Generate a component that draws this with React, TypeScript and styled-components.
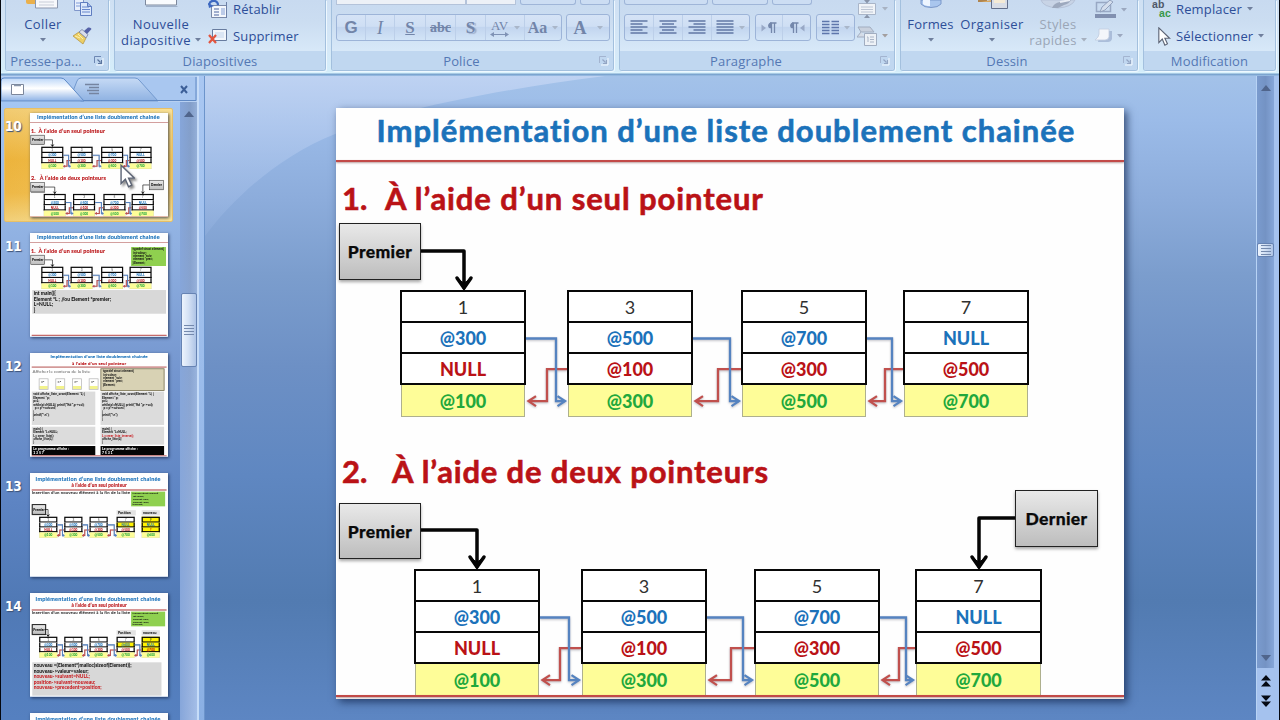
import React from "react";
import styled, { createGlobalStyle } from "styled-components";

const Global = createGlobalStyle`
  * { box-sizing: border-box; }
  body { margin: 0; background: #000; overflow: hidden; }
`;

const ui = `"Open Sans", "Noto Sans", sans-serif`;
const calibri = `Lato, "Liberation Sans", sans-serif`;
const BLUE = "#1b72ba";
const RED = "#ba1216";
const GREEN = "#21a83c";

/* ---------- application frame ---------- */

const Frame = styled.div`
  width: 1280px;
  height: 720px;
  overflow: hidden;
  display: flex;
  flex-direction: column;
  border-left: 1px solid #05080f;
  border-right: 1px solid #05080f;
  font-family: ${ui};
  background: #86a9dc;
`;

const Ribbon = styled.header`
  flex: none;
  height: 76px;
  display: flex;
  gap: 5px;
  padding: 0 3px 5px 4px;
  background: linear-gradient(#cfe0f3 0, #d6e9f8 50px, #d4edfa 72px, #e0f7ff 73px, #6f9bc8 74px, #9fc0e6 76px);
`;

const Group = styled.section<{ $w: number }>`
  flex: none;
  width: ${(p) => p.$w}px;
  height: 71px;
  display: flex;
  flex-direction: column;
  border: 1px solid #a3c0de;
  border-top: 0;
  border-radius: 0 0 3px 3px;
  box-shadow: 1px 1px 0 #eef8ff;
  background: linear-gradient(#c8daf0, #cbddf1 22px, #d7e8f8 50px);
  overflow: hidden;
`;

const GroupBody = styled.div<{ $pad?: number }>`
  flex: none;
  height: 51px;
  display: flex;
  padding-left: ${(p) => p.$pad ?? 0}px;
`;

const GroupLabel = styled.div<{ $shift?: number }>`
  position: relative;
  height: 19px;
  line-height: 20px;
  text-align: center;
  padding-right: ${(p) => p.$shift ?? 0}px;
  font-size: 13px;
  letter-spacing: 0.15px;
  color: #5478b4;
  white-space: nowrap;
  background: #c0d7f0;
  svg { position: absolute; right: 4px; top: 4px; }
`;

const BigButton = styled.div<{ $w: number; $dim?: boolean; $ls?: number }>`
  flex: none;
  width: ${(p) => p.$w}px;
  display: flex;
  flex-direction: column;
  align-items: center;
  font-size: 13px;
  line-height: 16px;
  letter-spacing: ${(p) => p.$ls ?? 0.15}px;
  color: ${(p) => (p.$dim ? "#9ba6b6" : "#2d4e98")};
  white-space: nowrap;
  > svg:first-child { flex: none; height: 16px; }
`;

const Line = styled.span`
  display: flex;
  align-items: center;
  min-height: 15px;
  gap: 4px;
`;

const IconColumn = styled.div<{ $w: number }>`
  flex: none;
  width: ${(p) => p.$w}px;
  display: flex;
  flex-direction: column;
`;

const SmallButton = styled.div<{ $h: number; $indent?: number }>`
  display: flex;
  align-items: center;
  height: ${(p) => p.$h}px;
  padding-left: ${(p) => p.$indent ?? 0}px;
  gap: 5px;
  font-size: 13px;
  letter-spacing: 0.15px;
  color: #2d4e98;
  white-space: nowrap;
  svg { flex: none; }
`;

const Tools = styled.div`
  display: flex;
  flex-direction: column;
  gap: 9px;
  padding-left: 4px;
`;

const ToolRow = styled.div<{ $gap: number }>`
  display: flex;
  gap: ${(p) => p.$gap}px;
`;

const BoxTop = styled.div<{ $w: number; $white?: boolean }>`
  width: ${(p) => p.$w}px;
  height: 5px;
  border: 1px solid ${(p) => (p.$white ? "#b4c3da" : "#9fb5d8")};
  border-top: 0;
  border-radius: ${(p) => (p.$white ? "0" : "0 0 3px 3px")};
  background: ${(p) => (p.$white ? "#edf1f7" : "#ccddf3")};
`;

const ToolBox = styled.div`
  height: 27px;
  display: flex;
  border: 1px solid #9db4d8;
  border-radius: 3px;
  background: linear-gradient(#d5e3f6 0, #cfdff4 45%, #c2d5ef 50%, #d2e4f7 100%);
`;

const Tool = styled.div<{ $w: number }>`
  width: ${(p) => p.$w}px;
  display: flex;
  align-items: center;
  justify-content: center;
  gap: 5px;
  border-right: 1px solid #bccfe9;
  color: #7285a9;
  &:last-child { border-right: 0; }
`;

type GlyphKind = "sans" | "italic" | "under" | "strike" | "shadow";

const Glyph = styled.span<{ $size: number; $kind?: GlyphKind }>`
  font-family: ${(p) => (p.$kind === "sans" ? `"Liberation Sans", sans-serif` : `"Liberation Serif", serif`)};
  font-size: ${(p) => p.$size}px;
  font-weight: ${(p) => (p.$kind === "italic" ? 400 : 700)};
  font-style: ${(p) => (p.$kind === "italic" ? "italic" : "normal")};
  text-decoration: ${(p) => (p.$kind === "under" ? "underline" : p.$kind === "strike" ? "line-through" : "none")};
  text-shadow: ${(p) => (p.$kind === "shadow" ? "2px 1px 1px #9aaac8" : "none")};
  line-height: 20px;
`;

const SpacingGlyph = styled.div`
  display: flex;
  flex-direction: column;
  align-items: center;
  font: 400 13px/13px "Liberation Serif", serif;
`;

const Caret = ({ color = "#6f7f9d", w = 6 }: { color?: string; w?: number }) => (
  <svg width={w} height="4" viewBox="0 0 6 4"><path d="M0 0h6L3 3.6z" fill={color} /></svg>
);

const Launcher = ({ dim }: { dim?: boolean }) => (
  <svg width="11" height="11" viewBox="0 0 11 11" fill="none" stroke={dim ? "#a3b4d0" : "#6d87b3"}>
    <path d="M1.5 8V1.5H8" />
    <path d="M4.500 4.500l3 3M8.500 5v3.500H5" stroke={dim ? "#93a5c4" : "#5b759f"} strokeWidth="1.2" />
    <path d="M10 3v7H3" stroke="#f4faff" />
  </svg>
);

/* ---------- ribbon icons ---------- */

const PasteIcon = () => (
  <svg width="34" height="16" viewBox="0 0 34 16">
    <path d="M0 0h14v4H2q-2 0-2-2z" fill="#eab04c" />
    <path d="M9.500 0v8h22V0" fill="#f7f8fb" stroke="#8c97ad" />
    <path d="M13 2h15M13 5h15" stroke="#c8cdd8" />
  </svg>
);
const CopyIcon = () => (
  <svg width="20" height="17" viewBox="0 0 20 17">
    <path d="M1.500 0v10.500h9V0" fill="#e8effb" stroke="#8097cb" />
    <path d="M3 3h6M3 6h6" stroke="#7e9bd8" />
    <path d="M7.500 2.500h7l4 4v9h-11z" fill="#dce8fb" stroke="#5f7dc0" />
    <path d="M9 7h7M9 9.500h8M9 12h8" stroke="#6686cc" />
    <path d="M14.500 2.500v4h4" fill="#9eb6e5" stroke="#5f7dc0" />
  </svg>
);
const BrushIcon = () => (
  <svg width="20" height="18" viewBox="0 0 20 18">
    <path d="M0 9l6-4 7 6-3 6q-5-4-10-8z" fill="#eccf66" stroke="#b89745" strokeWidth=".8" />
    <path d="M2 9l5 2M5 7l5 5" stroke="#fff0a8" />
    <path d="M6 5l3-2.500 6 5L13 11z" fill="#d9ddea" stroke="#7580a0" strokeWidth=".8" />
    <path d="M11 4l4-3.500q3-.5 3.500 1.500L14 7z" fill="#5562a8" />
  </svg>
);
const SlideIcon = () => (
  <svg width="34" height="16" viewBox="0 0 34 16">
    <path d="M1.500 0v5h31V0" fill="#f9fbfe" stroke="#7d889d" />
    <path d="M2 6.500h31.500" stroke="#9fb0c9" />
  </svg>
);
const ResetIcon = () => (
  <svg width="20" height="19" viewBox="0 0 20 19">
    <path d="M3.500 5.500h15v12h-15z" fill="#f4f7fc" stroke="#7a89a8" />
    <path d="M18.500 2v16" stroke="#6c7fa6" />
    <path d="M6 9h5M6 12h5M6 15h5" stroke="#8497bf" strokeWidth="1.300" />
    <path d="M13 8h4v7h-4z" fill="#bccbe8" />
    <path d="M1 5q1-5 6-4 3 1 3 4" fill="none" stroke="#3d68c0" strokeWidth="2.200" />
    <path d="M0 3l6 3-5 2z" fill="#3d68c0" />
  </svg>
);
const DeleteIcon = () => (
  <svg width="20" height="16" viewBox="0 0 20 16">
    <path d="M4.500 1.500h14v11h-14z" fill="#f2f6fb" stroke="#687c9f" />
    <path d="M7 4h9v6H7z" fill="#dbe6f4" />
    <path d="M1 7l7 8M8 7l-7 8" stroke="#e25640" strokeWidth="2.300" />
  </svg>
);
const SpacingIcon = () => (
  <svg width="19" height="5" viewBox="0 0 19 5" fill="#7f92b5"><path d="M0 2.500L4 0v2h11V0l4 2.500L15 5V3H4v2z" /></svg>
);
const AlignIcon = ({ mode }: { mode: "l" | "c" | "r" | "j" }) => (
  <svg width="18" height="15" viewBox="0 0 18 15" stroke="#6177a4" strokeWidth="1.600">
    {[0.5, 3.5, 6.5, 9.5, 12.500].map((y, i) => {
      const w = mode === "j" || i % 2 === 0 ? 17 : 12;
      const x = mode === "r" ? 17.500 - w : mode === "c" ? (18 - w) / 2 : 0.500;
      return <path key={y} d={`M${x} ${y + 0.500}h${w}`} />;
    })}
  </svg>
);
const PilcrowIcon = ({ flip }: { flip?: boolean }) => (
  <svg width="16" height="12" viewBox="0 0 16 12">
    <path d={flip ? "M15.500 2.500v7L11 6z" : "M.5 2.500v7L5 6z"} fill="#98a8c6" />
    <g transform={flip ? "translate(-6 0)" : undefined} stroke="#7487ab" strokeWidth="1.300">
      <path d="M10.500 1v10M13.500 1v10M9 1h6.500" />
      <path d="M10 1.200a2.200 2.200 0 0 0 0 4.500z" fill="#7487ab" />
    </g>
  </svg>
);
const ColumnsIcon = () => (
  <svg width="17" height="15" viewBox="0 0 17 15" stroke="#5e76ab" strokeWidth="1.600">
    <path d="M0 1.500h7.500M0 4.500h7.500M0 7.500h7.500M0 10.500h7.500M0 13.500h7.500M9.500 1.500H17M9.500 4.500H17M9.500 7.500H17M9.500 10.500H17M9.500 13.500H17" />
  </svg>
);
const AlignTextIcon = () => (
  <svg width="20" height="18" viewBox="0 0 20 18">
    <path d="M1.500 3.500h17v11h-17z" fill="#f1f4f8" stroke="#a9b5c8" />
    <path d="M4 7h12M4 9.500h12M4 12h12" stroke="#bcc5d4" />
    <path d="M7 0h6l-3 3.500zM7 18h6l-3-3.500z" fill="#8995aa" />
  </svg>
);
const SmartArtIcon = () => (
  <svg width="20" height="20" viewBox="0 0 20 20">
    <path d="M1 1h12l4 5H4z" fill="#c9d1de" stroke="#a1adc0" />
    <path d="M4 6L0 11h8" fill="#d5dce7" stroke="#a1adc0" />
    <path d="M7.500 7.500h12v12h-12z" fill="#edf1f6" stroke="#a1adc0" />
    <path d="M10 11h1v5M13 11h4M13 13.500h4M13 16h4" stroke="#aab5c7" fill="none" />
  </svg>
);
const ShapesIcon = () => (
  <svg width="24" height="16" viewBox="0 0 24 16">
    <path d="M2 0v4q3 3.500 10 3.500T22 4V0z" fill="#a9c6ee" stroke="#7b98ca" />
    <path d="M4 0h7v6Q6 6 4 4z" fill="#edf5ff" />
  </svg>
);
const ArrangeIcon = () => (
  <svg width="34" height="16" viewBox="0 0 34 16">
    <path d="M3 0h9v2H3z" fill="#b0854f" />
    <path d="M6 2h10v-2" fill="#d8a862" />
    <path d="M16.500 0v8.500h16V0" fill="#d9dde6" stroke="#64708c" />
    <path d="M19 0v3h11V0" fill="#f5ead5" />
  </svg>
);
const StylesIcon = () => (
  <svg width="36" height="16" viewBox="0 0 36 16">
    <path d="M1 0q2 7 17 8 14-1 17-8z" fill="#c8d4e6" stroke="#b5c2d8" />
    <path d="M12 8q2-5 8-6l5-2h6q-2 4-7 5l-6 3z" fill="#9da9be" />
    <path d="M20 2L30 0" stroke="#e8edf5" strokeWidth="2" />
  </svg>
);
const OutlineIcon = () => (
  <svg width="21" height="19" viewBox="0 0 21 19">
    <path d="M1.500 2.500h14v9h-14z" fill="none" stroke="#98a8c4" strokeWidth="1.500" />
    <path d="M5 12l2-5 8-7 3 2-8 8z" fill="#d4deed" stroke="#92a1bd" />
    <path d="M0 14h21v4H0z" fill="#8190b0" />
  </svg>
);
const EffectsIcon = () => (
  <svg width="17" height="16" viewBox="0 0 17 16">
    <path d="M5 3h12v8q-1 3-4 3H3z" fill="#9eb0d0" opacity=".75" />
    <path d="M4 1h10v8q-1 3-4 3H0q4-3 4-6z" fill="#f4f6fa" stroke="#c2cde0" strokeWidth=".8" />
  </svg>
);
const ReplaceIcon = styled.div`
  width: 19px;
  display: flex;
  flex-direction: column;
  font: 700 10.500px/9px "Liberation Sans", sans-serif;
  color: #4f5868;
  span:last-child { align-self: flex-end; color: #37984a; }
`;
const Pointer = ({ w, h }: { w: number; h: number }) => (
  <svg width={w} height={h} viewBox="0 0 14 22">
    <path d="M1 1v17l4-4 3 7 3-1.500-3-6.500h5.500z" fill="#fff" stroke="#5c6475" strokeWidth="1.300" />
  </svg>
);

/* ---------- slide canvas ---------- */

const SlideSurface = styled.div`
  position: relative;
  width: 788px;
  height: 591px;
  background: #fefefe;
  overflow: hidden;
  font-family: ${calibri};
`;

const Placed = styled.div<{ $x: number; $y: number; $w?: number; $h?: number }>`
  position: absolute;
  left: ${(p) => p.$x}px;
  top: ${(p) => p.$y}px;
  width: ${(p) => (p.$w ? `${p.$w}px` : "auto")};
  height: ${(p) => (p.$h ? `${p.$h}px` : "auto")};
`;

const SlideText = styled(Placed)<{ $size: number; $color: string; $ls?: number; $weight?: number; $center?: boolean }>`
  font-size: ${(p) => p.$size}px;
  line-height: 1.2;
  font-weight: ${(p) => p.$weight ?? 700};
  -webkit-text-stroke: ${(p) => (p.$weight === 400 ? 0 : 0.6)}px currentColor;
  color: ${(p) => p.$color};
  letter-spacing: ${(p) => p.$ls ?? 0}px;
  text-align: ${(p) => (p.$center ? "center" : "left")};
  white-space: pre;
`;

const Rule = styled(Placed)`
  background: #c24a48;
  box-shadow: 0 1px 2px rgba(120, 60, 60, 0.5);
`;

const PointerBox = styled(Placed)<{ $line: number }>`
  display: flex;
  align-items: center;
  justify-content: center;
  border: ${(p) => p.$line}px solid #222;
  background: linear-gradient(#e9e9e9, #bdbdbd);
  box-shadow: 0 2px 3px rgba(0, 0, 0, 0.35);
  font-size: 17.500px;
  font-weight: 900;
  letter-spacing: 0.35px;
  -webkit-text-stroke: 0.25px currentColor;
  color: #0a0a0a;
`;

const Node = styled(Placed)`
  display: flex;
  flex-direction: column;
`;

const Cell = styled.div<{ $color: string; $bg: string; $line: number; $last?: boolean; $first?: boolean; $plain?: boolean }>`
  flex: ${(p) => (p.$last ? "0 0 25.500%" : "1 1 0")};
  min-height: 0;
  display: flex;
  align-items: center;
  justify-content: center;
  padding-top: 2px;
  background: ${(p) => p.$bg};
  color: ${(p) => p.$color};
  font-size: 18px;
  line-height: 20px;
  font-weight: ${(p) => (p.$plain ? 400 : 900)};
  border: ${(p) => (p.$last ? 1 : p.$line)}px solid ${(p) => (p.$last ? "#aeb08e" : "#080808")};
  border-top-width: ${(p) => (p.$first ? p.$line : 0)}px;
  margin: ${(p) => (p.$last ? "0 1px" : "0")};
`;

const Vectors = styled.svg`
  position: absolute;
  inset: 0;
`;

type NodeSpec = { x: number; cells: string[]; hot?: number[] };

function NodeView({ n, y, w, h, line }: { n: NodeSpec; y: number; w: number; h: number; line: number }) {
  const colors = ["#303030", BLUE, RED, GREEN];
  return (
    <Node $x={n.x} $y={y} $w={w} $h={h}>
      {n.cells.map((c, i) => (
        <Cell
          key={i}
          $color={colors[i]}
          $bg={i === 3 ? "#fefd98" : n.hot?.includes(i) ? "#fff200" : "#fff"}
          $line={line}
          $first={i === 0}
          $last={i === 3}
          $plain={i === 0}
        >
          {c}
        </Cell>
      ))}
    </Node>
  );
}

type Link = { from: number; to: number; bx: number; rx: number };

const LinkGroup = styled.g`
  filter: drop-shadow(0 1px 1px rgba(60, 60, 80, 0.35));
`;

function Links({ links, y, step, thin }: { links: Link[]; y: number; step: number; thin: number }) {
  const y1 = y + step * 1.550, y2 = y + step * 2.530, y3 = y + step * 3.550;
  return (
    <LinkGroup fill="none" strokeWidth={thin}>
      {links.map((l) => (
        <g key={l.from}>
          <path stroke="#c0504d" d={`M${l.to} ${y2}H${l.rx}V${y3}H${l.from + 4}`} />
          <path stroke="#c0504d" d={`M${l.from + 10} ${y3 - 5}L${l.from + 2.500} ${y3}l7.500 5`} />
          <path stroke="#5583c0" d={`M${l.from} ${y1}H${l.bx}V${y3}H${l.to - 2}`} />
          <path stroke="#5583c0" d={`M${l.to - 9.500} ${y3 - 5}L${l.to - 2} ${y3}l-7.500 5`} />
        </g>
      ))}
    </LinkGroup>
  );
}

const DropArrow = ({ x, y, tx, ty }: { x: number; y: number; tx: number; ty: number }) => (
  <g stroke="#050505" strokeWidth="3.500" fill="none" strokeLinejoin="round">
    <path d={`M${x} ${y}H${tx}V${ty - 4}`} />
    <path d={`M${tx - 7} ${ty - 12}L${tx} ${ty - 2}l7 -10`} strokeLinecap="round" />
    <path d={`M${tx - 5} ${ty - 10}L${tx} ${ty}l5 -10L${tx} ${ty - 7}z`} fill="#050505" strokeWidth="1" />
  </g>
);

const values = [
  ["1", "@300", "NULL", "@100"],
  ["3", "@500", "@100", "@300"],
  ["5", "@700", "@300", "@500"],
  ["7", "NULL", "@500", "@700"],
];
const rowA: NodeSpec[] = [64, 231, 405, 567].map((x, i) => ({ x, cells: values[i] }));
const rowB: NodeSpec[] = [78, 245, 418, 579].map((x, i) => ({ x, cells: values[i] }));
const linksA: Link[] = [
  { from: 190, to: 231, bx: 220, rx: 211 },
  { from: 357, to: 405, bx: 394, rx: 382 },
  { from: 531, to: 567, bx: 556, rx: 549 },
];
const linksB: Link[] = [
  { from: 204, to: 245, bx: 233, rx: 224 },
  { from: 371, to: 418, bx: 407, rx: 395 },
  { from: 544, to: 579, bx: 570, rx: 563 },
];

function Title() {
  return (
    <>
      <SlideText $x={40.500} $y={3.500} $size={31} $color={BLUE} $ls={0.99}>
        Implémentation d’une liste doublement chainée
      </SlideText>
      <Rule $x={0} $y={52} $w={788} $h={2} />
    </>
  );
}

function FirstList({ line, thin, dy = 0 }: { line: number; thin: number; dy?: number }) {
  return (
    <Placed $x={0} $y={dy} $w={788} $h={320}>
      <SlideText $x={6} $y={72} $size={31} $color={RED}>1.</SlideText>
      <SlideText $x={49} $y={72} $size={31} $color={RED} $ls={0.9}>À l’aide d’un seul pointeur</SlideText>
      <PointerBox $x={3} $y={115} $w={82} $h={57} $line={line / 2}>Premier</PointerBox>
      {rowA.map((n) => <NodeView key={n.x} n={n} y={182} w={126} h={127} line={line} />)}
      <Vectors width="788" height="320">
        <Links links={linksA} y={182} step={31.300} thin={thin} />
        <DropArrow x={85} y={143} tx={128} ty={182} />
      </Vectors>
    </Placed>
  );
}

function MainSlide({ line = 2.500, thin = 2.300, dy = 0 }: { line?: number; thin?: number; dy?: number }) {
  return (
    <SlideSurface>
      <Title />
      <FirstList line={line} thin={thin} dy={dy} />
      <SlideText $x={6} $y={345 + dy / 2} $size={31} $color={RED}>2.</SlideText>
      <SlideText $x={56} $y={345 + dy / 2} $size={31} $color={RED} $ls={0.83}>À l’aide de deux pointeurs</SlideText>
      <PointerBox $x={3} $y={395} $w={82} $h={56} $line={line / 2}>Premier</PointerBox>
      <PointerBox $x={679} $y={382} $w={83} $h={57} $line={line / 2}>Dernier</PointerBox>
      {rowB.map((n) => <NodeView key={n.x} n={n} y={461} w={n.x === 579 ? 127 : 126} h={127} line={line} />)}
      <Vectors width="788" height="591">
        <Links links={linksB} y={461} step={31.300} thin={thin} />
        <DropArrow x={85} y={422} tx={141} ty={461} />
        <DropArrow x={679} y={410} tx={643} ty={461} />
      </Vectors>
      <Rule $x={0} $y={587} $w={788} $h={2} />
    </SlideSurface>
  );
}

/* ---------- other slides, shown only as thumbnails ---------- */

const CodeBox = styled(Placed)<{ $bg: string; $size: number; $fg?: string; $border?: string }>`
  background: ${(p) => p.$bg};
  color: ${(p) => p.$fg ?? "#111"};
  border: ${(p) => (p.$border ? `4px solid ${p.$border}` : "0")};
  font-size: ${(p) => p.$size}px;
  line-height: 1.120;
  font-weight: 900;
  padding: 3px 8px;
  white-space: pre;
  em { font-style: normal; color: #c81a1e; }
`;

const struct = "typedef struct element{\n int valeur;\n element *suiv;\n element *prec;\n}Element;";

function Slide11() {
  return (
    <SlideSurface>
      <Title />
      <FirstList line={7} thin={6} dy={10} />
      <CodeBox $x={576} $y={80} $w={199} $h={108} $bg="#8fd04f" $size={17}>{struct}</CodeBox>
      <CodeBox $x={13} $y={325} $w={762} $h={135} $bg="#d8d8d8" $size={28}>
        {"int main(){\nElement *L ; //ou Element *premier;\nL=NULL;\n}"}
      </CodeBox>
      <Rule $x={10} $y={580} $w={768} $h={5} />
    </SlideSurface>
  );
}

const printer = "void affiche_liste_avant(Element *L) {\nElement *p;\np=L;\nwhile(p!=NULL){ printf(\"%d \",p->val);\n  p = p->suivant;\n}\nprintf(\"\\n\");\n}";
const caller = "main() {\nElement *L=NULL;\nL = creer_liste();\naffiche_liste(L);\n}";

function Slide12() {
  return (
    <SlideSurface>
      <SlideText $x={0} $y={6} $w={788} $size={25} $color={BLUE} $ls={0.6} $center>Implémentation d’une liste doublement chainée</SlideText>
      <SlideText $x={0} $y={42} $w={788} $size={25} $color={RED} $ls={1} $center>à l’aide d’un seul pointeur</SlideText>
      <Rule $x={10} $y={78} $w={768} $h={4} />
      <SlideText $x={14} $y={90} $size={26} $color="#666" $weight={400}>Afficher le contenu de la liste</SlideText>
      {[50, 145, 240, 335].map((x) => (
        <CodeBox key={x} $x={x} $y={145} $w={55} $h={64} $bg="linear-gradient(#fff 70%, #f3f38c 70%)" $border="#b3b3b3" $size={14}>@1</CodeBox>
      ))}
      <CodeBox $x={10} $y={220} $w={362} $h={190} $bg="#dcdcdc" $size={18}>{printer}</CodeBox>
      <CodeBox $x={402} $y={220} $w={362} $h={190} $bg="#dcdcdc" $size={18}>{printer}</CodeBox>
      <CodeBox $x={402} $y={88} $w={364} $h={128} $bg="#d8d2b4" $border="#6d6748" $size={17}>{struct}</CodeBox>
      <CodeBox $x={10} $y={420} $w={362} $h={102} $bg="#dcdcdc" $size={17}>{caller}</CodeBox>
      <CodeBox $x={402} $y={420} $w={362} $h={102} $bg="#dcdcdc" $size={17}>
        {"main() {\nElement *L=NULL;\n"}<em>{"L = creer_liste_inverse();\n"}</em>{"affiche_liste(L);\n}"}
      </CodeBox>
      <CodeBox $x={10} $y={530} $w={362} $h={52} $bg="#050505" $fg="#fff" $size={20}>{"Le programme affiche :\n1 3 5 7"}</CodeBox>
      <CodeBox $x={402} $y={530} $w={362} $h={52} $bg="#050505" $fg="#fff" $size={20}>{"Le programme affiche :\n7 5 3 1"}</CodeBox>
      <Rule $x={10} $y={584} $w={768} $h={4} />
    </SlideSurface>
  );
}

const LowTitle = () => (
  <SlideText $x={32} $y={14} $size={31} $color={BLUE} $ls={1.300}>Implémentation d’une liste doublement chainée</SlideText>
);

function InsertSlide({ done }: { done?: boolean }) {
  const nodes: NodeSpec[] = [
    { x: 52, cells: values[0] },
    { x: 195, cells: values[1] },
    { x: 339, cells: values[2] },
    { x: 493, cells: ["7", done ? "@600" : "NULL", "@500", "@700"], hot: [1] },
    { x: 636, cells: ["9", "NULL", done ? "@700" : "?", "@600"], hot: [0, 1, 2] },
  ];
  const links: Link[] = [
    { from: 155, to: 195, bx: 185, rx: 170 },
    { from: 298, to: 339, bx: 328, rx: 312 },
    { from: 442, to: 493, bx: 480, rx: 458 },
  ];
  if (done) links.push({ from: 596, to: 636, bx: 626, rx: 611 });
  return (
    <SlideSurface>
      <LowTitle />
      <SlideText $x={0} $y={57} $w={788} $size={26} $color={RED} $ls={0.8} $center>à l’aide d’un seul pointeur</SlideText>
      <Rule $x={10} $y={94} $w={768} $h={5} />
      <SlideText $x={10} $y={97} $size={24} $color="#444" $ls={0.8}>Insertion d’un nouveau élément à la fin de la liste</SlideText>
      <CodeBox $x={576} $y={106} $w={194} $h={84} $bg="#8fd04f" $size={14}>{struct}</CodeBox>
      <PointerBox $x={10} $y={177} $w={82} $h={62} $line={6}>Premier</PointerBox>
      <CodeBox $x={493} $y={212} $w={110} $h={30} $bg="#e3e3e3" $size={20}>Position</CodeBox>
      <CodeBox $x={636} $y={212} $w={104} $h={30} $bg="#e3e3e3" $size={20}>nouveau</CodeBox>
      {nodes.map((n) => <NodeView key={n.x} n={n} y={249} w={104} h={120} line={7} />)}
      <Vectors width="788" height="591">
        <Links links={links} y={249} step={30} thin={6} />
        <DropArrow x={85} y={208} tx={103} ty={249} />
      </Vectors>
      {done && (
        <CodeBox $x={13} $y={395} $w={736} $h={190} $bg="#d8d8d8" $size={28}>
          {"nouveau =(Element*)malloc(sizeof(Element));\nnouveau->valeur=valeur;\n"}
          <em>{"nouveau->suivant=NULL;\nposition->suivant=nouveau;\nnouveau->precedent=position;"}</em>
        </CodeBox>
      )}
    </SlideSurface>
  );
}

/* ---------- panes ---------- */

const Body = styled.div`
  flex: 1;
  min-height: 0;
  display: flex;
`;

const SidePane = styled.aside`
  flex: none;
  width: 196px;
  display: flex;
  flex-direction: column;
`;

const Tabs = styled.div`
  flex: none;
  height: 26px;
  background: #b7d0f2;
  svg { display: block; }
`;

const SideContent = styled.div`
  flex: 1;
  min-height: 0;
  display: flex;
`;

const ThumbList = styled.div`
  flex: 1;
  min-width: 0;
  padding: 5px 6px 0 3px;
  overflow: hidden;
  background: linear-gradient(#a4c6f3 0, #8eafe0 150px, #7496cf 270px, #5d84c3 400px, #5079b5 500px, #5580c0 618px);
`;

const ThumbRow = styled.div<{ $on?: boolean }>`
  position: relative;
  height: 120px;
  display: flex;
  align-items: flex-start;
  padding: 6px 0 0 1px;
  &::before {
    content: "";
    display: ${(p) => (p.$on ? "block" : "none")};
    position: absolute;
    inset: 1px 1px 5px 0;
    border: 1px solid #e8c067;
    border-radius: 2px;
    background: linear-gradient(90deg, rgba(222, 150, 24, 0.25), rgba(255, 240, 170, 0.2)), linear-gradient(#f8dd90, #f1bd48 45%, #f3c355 75%, #f8e39b);
  }
  > * { position: relative; }
`;

const ThumbNumber = styled.div`
  width: 25px;
  padding-top: 4px;
  font: 700 13.500px/18px "DejaVu Sans Condensed", "DejaVu Sans", sans-serif;
  letter-spacing: -0.3px;
  color: #fff;
  text-shadow: 1px 1px 1px #3c5278;
`;

const ThumbFrame = styled.div`
  width: 138px;
  height: 104px;
  overflow: hidden;
  box-shadow: 1px 1px 3px rgba(20, 35, 70, 0.75);
  > div { transform: scale(0.1755); transform-origin: 0 0; }
`;

const CursorSpot = styled.div`
  && { position: absolute; }
  left: 116px;
  top: 57px;
  filter: drop-shadow(2px 2px 1px rgba(0, 0, 0, 0.45));
`;

const Scroll = styled.div<{ $w: number }>`
  flex: none;
  width: ${(p) => p.$w}px;
  display: flex;
  flex-direction: column;
  align-items: center;
  background: linear-gradient(90deg, #7a9bce, #7493c4 50%, #86a6d8);
`;

const SideScroll = styled(Scroll)`
  background: linear-gradient(90deg, #86a6da, rgba(255, 255, 255, 0.12) 60%, rgba(210, 230, 255, 0.35)), linear-gradient(#7291c2, #7897ca 40%, #8ba9dc);
`;

const Spacer = styled.div<{ $h: number }>`
  flex: none;
  height: ${(p) => p.$h}px;
`;

const Grip = styled.div<{ $w: number; $h: number }>`
  flex: none;
  width: ${(p) => p.$w}px;
  height: ${(p) => p.$h}px;
  display: flex;
  align-items: center;
  justify-content: center;
  border: 1px solid #6683b3;
  border-radius: 2px;
  background: linear-gradient(90deg, #edf4fd, #d5e2f5 45%, #aec4e6);
`;

const Splitter = styled.div`
  flex: none;
  width: 8px;
  background: linear-gradient(rgba(255, 255, 255, 0), rgba(82, 132, 200, 0.35));
  background-color: #a9c7f2;
  border-left: 2px solid #c6dcf8;
  border-right: 1px solid #6c94cb;
`;

const Stage = styled.main`
  position: relative;
  flex: 1;
  min-width: 0;
  padding: 32px 0 0 131px;
  overflow: hidden;
  background: linear-gradient(#a3c2e9 0, #9bbbe8 45px, #8cacdb 125px, #7b9dcd 200px, #6d90c5 290px, #5f87c1 400px, #527bb1 525px, #5d86c3 644px);
`;

const Swoosh = styled.svg`
  position: absolute;
  left: 0;
  top: 0;
`;

const SlideShadow = styled.div`
  position: relative;
  width: 788px;
  height: 591px;
  box-shadow: 3px 3px 8px rgba(20, 40, 80, 0.75);
`;

const RightBar = styled.div`
  flex: none;
  width: 23px;
  padding-right: 5px;
  display: flex;
  flex-direction: column;
  border-left: 1px solid #b8d3f5;
  background: #a5c2ee;
`;

const Jump = styled.div`
  height: 52px;
  display: flex;
  flex-direction: column;
  align-items: center;
  padding-top: 7px;
  gap: 8px;
`;

const UpTri = () => <svg width="10" height="6" viewBox="0 0 10 6"><path d="M0 6L5 0l5 6z" fill="#50658c" /></svg>;
const GripLines = () => (
  <svg width="10" height="10" viewBox="0 0 10 10" stroke="#7489ad"><path d="M0 .5h10M0 3.500h10M0 6.500h10M0 9.500h10" /></svg>
);
const Double = ({ down }: { down?: boolean }) => (
  <svg width="10" height="12" viewBox="0 0 10 12">
    <path transform={down ? "rotate(180 5 6)" : undefined} d="M0 5.500L5 0l5 5.500zM0 11.500L5 6l5 5.500z" fill="#050a14" />
  </svg>
);

function SideTabs() {
  return (
    <svg width="196" height="26" viewBox="0 0 196 26">
      <defs>
        <linearGradient id="tabOn" x1="0" y1="0" x2="0" y2="1">
          <stop offset="0" stopColor="#bdd7f8" /><stop offset=".45" stopColor="#fff" /><stop offset="1" stopColor="#8eb3e6" />
        </linearGradient>
        <linearGradient id="tabOff" x1="0" y1="0" x2="0" y2="1">
          <stop offset="0" stopColor="#c6daf5" /><stop offset="1" stopColor="#8fb2e2" />
        </linearGradient>
      </defs>
      <path d="M0 1h196v24H0z" fill="#a9c7f0" />
      <path d="M70 20L76 5q1-3 4-3h54q3 0 5 3l18 20H80z" fill="url(#tabOff)" stroke="#7299cf" />
      <path d="M0 25V5q0-3 3-3h57q3 0 5 3l18 20z" fill="url(#tabOn)" stroke="#5f8bc8" />
      <path d="M83 24.500h112V1" stroke="#6089c4" fill="none" />
      <path d="M10.500 8.500h12v10h-12z" fill="#fff" stroke="#7b869b" /><path d="M13 9.500h7" stroke="#8996ab" strokeWidth="1.500" />
      <path d="M84 8.500h14M88 11.500h10M86 14.500h12M88 17.500h10" stroke="#7584a0" strokeWidth="1.500" />
      <path d="M180 10l6 7M186 10l-6 7" stroke="#3c5f98" strokeWidth="2" />
    </svg>
  );
}

const thumbs: [number, React.ReactNode][] = [
  [10, <MainSlide line={7} thin={6} dy={10} />],
  [11, <Slide11 />],
  [12, <Slide12 />],
  [13, <InsertSlide />],
  [14, <InsertSlide done />],
];

const pale = "#a9b6c9";

export default function App() {
  return (
    <Frame>
      <Global />
      <Ribbon>
        <Group $w={104}>
          <GroupBody $pad={7}>
            <BigButton $w={60} $ls={0.4}><PasteIcon /><span>Coller</span><Line><Caret /></Line></BigButton>
            <IconColumn $w={22}><CopyIcon /><Spacer $h={10} /><BrushIcon /></IconColumn>
          </GroupBody>
          <GroupLabel $shift={22}>Presse-pa...<Launcher /></GroupLabel>
        </Group>
        <Group $w={212}>
          <GroupBody $pad={5}>
            <BigButton $w={82} $ls={0.4}><SlideIcon /><span>Nouvelle</span><Line>diapositive<Caret /></Line></BigButton>
            <IconColumn $w={110}>
              <SmallButton $h={18} $indent={6}><ResetIcon />Rétablir</SmallButton>
              <Spacer $h={9} />
              <SmallButton $h={18} $indent={6}><DeleteIcon />Supprimer</SmallButton>
            </IconColumn>
          </GroupBody>
          <GroupLabel>Diapositives</GroupLabel>
        </Group>
        <Group $w={283}>
          <GroupBody>
            <Tools>
              <ToolRow $gap={4}>
                <ToolRow $gap={0}><BoxTop $w={130} $white /><BoxTop $w={50} $white /></ToolRow>
                <BoxTop $w={56} /><BoxTop $w={30} />
              </ToolRow>
              <ToolRow $gap={4}>
                <ToolBox>
                  <Tool $w={29}><Glyph $size={17} $kind="sans">G</Glyph></Tool>
                  <Tool $w={29}><Glyph $size={18} $kind="italic">I</Glyph></Tool>
                  <Tool $w={31}><Glyph $size={17} $kind="under">S</Glyph></Tool>
                  <Tool $w={30}><Glyph $size={14} $kind="strike">abc</Glyph></Tool>
                  <Tool $w={30}><Glyph $size={17} $kind="shadow">S</Glyph></Tool>
                  <Tool $w={39}><SpacingGlyph>AV<SpacingIcon /></SpacingGlyph><Caret color={pale} /></Tool>
                  <Tool $w={36}><Glyph $size={16}>Aa</Glyph><Caret color={pale} /></Tool>
                </ToolBox>
                <ToolBox><Tool $w={42}><Glyph $size={18}>A</Glyph><Spacer $h={1} /><Caret color={pale} /></Tool></ToolBox>
              </ToolRow>
            </Tools>
          </GroupBody>
          <GroupLabel $shift={22}>Police<Launcher dim /></GroupLabel>
        </Group>
        <Group $w={276}>
          <GroupBody>
            <Tools>
              <ToolRow $gap={4}><BoxTop $w={84} /><BoxTop $w={56} /><BoxTop $w={40} /></ToolRow>
              <ToolRow $gap={5}>
                <ToolBox>
                  <Tool $w={29}><AlignIcon mode="l" /></Tool>
                  <Tool $w={29}><AlignIcon mode="c" /></Tool>
                  <Tool $w={29}><AlignIcon mode="r" /></Tool>
                  <Tool $w={37}><AlignIcon mode="j" /><Caret color={pale} /></Tool>
                </ToolBox>
                <ToolBox><Tool $w={27}><PilcrowIcon /></Tool><Tool $w={27}><PilcrowIcon flip /></Tool></ToolBox>
                <ToolBox><Tool $w={37}><ColumnsIcon /><Caret color={pale} /></Tool></ToolBox>
              </ToolRow>
            </Tools>
            <IconColumn $w={40}>
              <SmallButton $h={18} $indent={2}><AlignTextIcon /><Caret color="#a8b2c2" /></SmallButton>
              <Spacer $h={8} />
              <SmallButton $h={20} $indent={2}><SmartArtIcon /><Caret color="#a39f9f" /></SmallButton>
            </IconColumn>
          </GroupBody>
          <GroupLabel $shift={22}>Paragraphe<Launcher dim /></GroupLabel>
        </Group>
        <Group $w={238}>
          <GroupBody $pad={1}>
            <BigButton $w={57}><ShapesIcon /><span>Formes</span><Line><Caret /></Line></BigButton>
            <BigButton $w={66} $ls={0.4}><ArrangeIcon /><span>Organiser</span><Line><Caret /></Line></BigButton>
            <BigButton $w={66} $dim $ls={0.3}><StylesIcon /><span>Styles</span><Line>rapides<Caret color="#a7b0bf" /></Line></BigButton>
            <IconColumn $w={42}>
              <SmallButton $h={19} $indent={4}><OutlineIcon /><Caret color="#9ba8bf" /></SmallButton>
              <Spacer $h={8} />
              <SmallButton $h={17} $indent={4}><EffectsIcon /><Caret color="#9ba8bf" /></SmallButton>
            </IconColumn>
          </GroupBody>
          <GroupLabel $shift={24}>Dessin<Launcher dim /></GroupLabel>
        </Group>
        <Group $w={133}>
          <GroupBody $pad={8}>
            <IconColumn $w={120}>
              <SmallButton $h={18}><ReplaceIcon><span>ab</span><span>ac</span></ReplaceIcon>Remplacer<Caret /></SmallButton>
              <Spacer $h={9} />
              <SmallButton $h={18} $indent={5}><Pointer w={14} h={19} />Sélectionner<Caret /></SmallButton>
            </IconColumn>
          </GroupBody>
          <GroupLabel>Modification</GroupLabel>
        </Group>
      </Ribbon>
      <Body>
        <SidePane>
          <Tabs><SideTabs /></Tabs>
          <SideContent>
            <ThumbList>
              {thumbs.map(([n, slide]) => (
                <ThumbRow key={n} $on={n === 10}>
                  <ThumbNumber>{n}</ThumbNumber>
                  <ThumbFrame>{slide}</ThumbFrame>
                  {n === 10 && <CursorSpot><Pointer w={15} h={24} /></CursorSpot>}
                </ThumbRow>
              ))}
              <ThumbRow>
                <ThumbNumber />
                <ThumbFrame><SlideSurface><LowTitle /></SlideSurface></ThumbFrame>
              </ThumbRow>
            </ThumbList>
            <SideScroll $w={17}>
              <Spacer $h={9} />
              <UpTri />
              <Spacer $h={176} />
              <Grip $w={16} $h={74}><GripLines /></Grip>
            </SideScroll>
          </SideContent>
        </SidePane>
        <Splitter />
        <Stage>
          <Swoosh width="500" height="300" viewBox="0 0 500 300">
            <defs>
              <linearGradient id="sw" x1="0" y1="0" x2="0" y2="1">
                <stop offset="0" stopColor="#bed2f2" /><stop offset="1" stopColor="#a0bce8" stopOpacity=".2" />
              </linearGradient>
            </defs>
            <path d="M0 0H400C290 14 190 34 130 58C75 80 30 120 0 160z" fill="url(#sw)" />
          </Swoosh>
          <SlideShadow><MainSlide /></SlideShadow>
        </Stage>
        <RightBar>
          <Scroll $w={17}>
            <Spacer $h={9} />
            <UpTri />
            <Spacer $h={152} />
            <Grip $w={17} $h={14}><GripLines /></Grip>
            <Spacer $h={398} />
            <svg width="10" height="6" viewBox="0 0 10 6"><path d="M0 0h10L5 6z" fill="#50658c" /></svg>
            <Spacer $h={7} />
          </Scroll>
          <Jump><Double /><Double down /></Jump>
        </RightBar>
      </Body>
    </Frame>
  );
}
